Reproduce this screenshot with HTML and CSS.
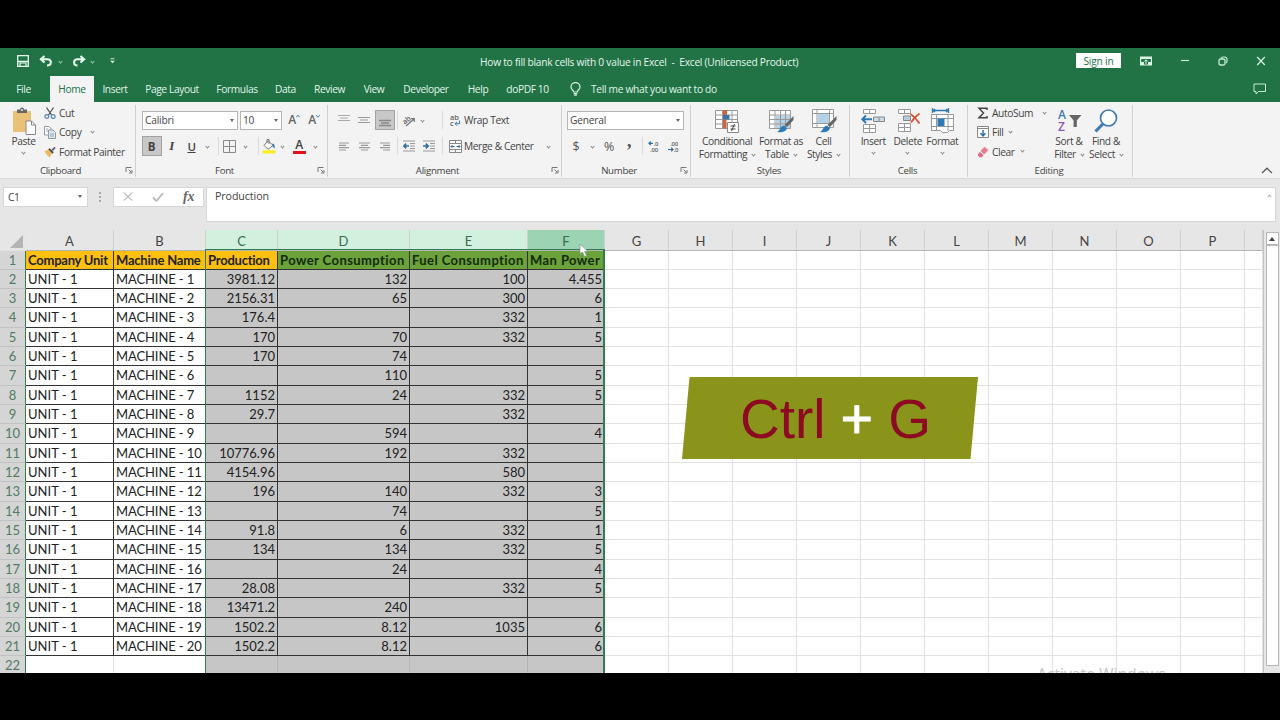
FILE: index.html
```html
<!DOCTYPE html>
<html lang="en">
<head>
  <meta charset="UTF-8">
  <title>How to fill blank cells with 0 value in Excel</title>
  <meta name="viewport" content="width=device-width, initial-scale=1.0">
  <link rel="stylesheet" href="styles.css">
</head>
<body>

  <div class="window">

    <header class="titlebar">
      <div class="quick">
        <svg width="12" height="12" viewBox="0 0 12 12"><path d="M.7.700h10.600v10.600H.7zM.7 6.500h10.600" fill="none" stroke="#e6fff0" stroke-width="1.300"/><path d="M3 11V8h6v3" fill="none" stroke="#e6fff0" stroke-width="1.200"/></svg>
        <svg width="14" height="12" viewBox="0 0 14 12"><path d="M5.500 1L1.800 4.300l3.700 3.200M2 4.300h6.500c4.600 0 4.600 6.200-.5 6.200" fill="none" stroke="#e6fff0" stroke-width="2"/></svg>
        <i class="chev light"></i>
        <svg width="14" height="12" viewBox="0 0 14 12"><path d="M8.500 1l3.700 3.300-3.700 3.200M12 4.300H5.500c-4.600 0-4.600 6.200 0 6.200" fill="none" stroke="#e6fff0" stroke-width="2"/></svg>
        <i class="chev light"></i>
        <svg width="5" height="6" viewBox="0 0 5 6"><path d="M.5.800h4" stroke="#c9ecd5"/><path d="M.3 2.800h4.400L2.500 5.300z" fill="#e6fff0"/></svg>
      </div>
      <div class="doc-title">How to fill blank cells with 0 value in Excel &nbsp;- &nbsp;Excel (Unlicensed Product)</div>
      <div class="win-controls">
        <button class="signin">Sign in</button>
        <svg width="12" height="10" viewBox="0 0 12 10"><path d="M.6 1h10.800v8H.6z" fill="none" stroke="#d8f5e2" stroke-width="1.200"/><path d="M1 1h10v2H1zM1 6h3v3H1zM8 6h3v3H8z" fill="#d8f5e2"/><path d="M6 8V4M4.300 5.500L6 3.800l1.700 1.700" fill="none" stroke="#d8f5e2"/></svg>
        <svg width="10" height="10" viewBox="0 0 10 10"><path d="M1 4.500h8" stroke="#c9ecd5" stroke-width="1.200"/></svg>
        <svg width="10" height="10" viewBox="0 0 10 10"><rect x="1" y="3" width="6" height="6" rx="1.500" fill="none" stroke="#c9ecd5" stroke-width="1.300"/><path d="M3 2.200C3.500 1 4 1 5 1h1.500C8.500 1 9 2 9 3.500V5c0 1-.3 1.700-1.200 2" fill="none" stroke="#c9ecd5" stroke-width="1.200"/></svg>
        <svg width="10" height="10" viewBox="0 0 10 10"><path d="M1.200 1l7.600 8M8.800 1L1.200 9" stroke="#d8f5e2" stroke-width="1.200"/></svg>
      </div>
    </header>

    <nav class="tabs">
      <span>File</span>
      <span class="active">Home</span>
      <span>Insert</span>
      <span>Page Layout</span>
      <span>Formulas</span>
      <span>Data</span>
      <span>Review</span>
      <span>View</span>
      <span>Developer</span>
      <span>Help</span>
      <span>doPDF 10</span>
      <span><svg width="11" height="14" viewBox="0 0 11 14"><path d="M3.500 10V9C2.500 8 1 7 1 4.900a4.500 4.300 0 0 1 9 0C10 7 8.500 8 7.500 9v1zM3.700 11.600h3.600M4.200 13.200h2.600" fill="none" stroke="#d8f5e2" stroke-width="1.200"/></svg></span>
      <span class="tell">Tell me what you want to do</span>
      <span class="comment"><svg width="14" height="12" viewBox="0 0 14 12"><path d="M1 1h11.500v7.500H5.500L3 11V8.500H1z" fill="none" stroke="#c9ecd5"/></svg></span>
    </nav>

    <section class="ribbon">

      <div class="group clipboard">
        <div class="tools">
          <div class="big">
            <svg width="26" height="28" viewBox="0 0 26 28"><path d="M2 4h18v21H2z" fill="#e9c277"/><path d="M6 2.500h3a2 2 0 0 1 4 0h3V6H6z" fill="#666"/><circle cx="11" cy="3" r="1" fill="#eee"/><path d="M15 14h5.500l4 4v9.500H15z" fill="#fff" stroke="#888"/><path d="M20.500 14v4h4" fill="none" stroke="#888"/></svg>
            <span>Paste</span>
            <i class="chev"></i>
          </div>
          <div class="stack">
            <div><svg width="12" height="12" viewBox="0 0 12 12"><path d="M2.500.500l5 7.500M9.500.500l-5 7.500" stroke="#555" stroke-width="1.300"/><circle cx="2.800" cy="9.500" r="1.900" fill="none" stroke="#5b87b5" stroke-width="1.200"/><circle cx="9.200" cy="9.500" r="1.900" fill="none" stroke="#5b87b5" stroke-width="1.200"/></svg>Cut</div>
            <div><svg width="12" height="13" viewBox="0 0 12 13"><path d="M.5.500h4.500l2 2V9H.5z" fill="#fff" stroke="#8f9aa5"/><path d="M4.500 4h4.500l2.500 2.500v6h-7z" fill="#dce6ef" stroke="#8f9aa5"/><path d="M6 8h4M6 10h4M2 3h2M2 5h2" stroke="#7f9ab5" stroke-width=".8"/></svg>Copy<i class="chev far"></i></div>
            <div><svg width="12" height="12" viewBox="0 0 12 12"><path d="M.5 5.500L4 3.500l4 4-2.500 4C4 10 2 8 .5 5.500z" fill="#ecb862"/><path d="M4.200 3.200l1.500-1 4 4-1.200 1.500z" fill="#444"/><path d="M7.500 3.500L10.500.800l1.200 1.200L9 5z" fill="#666"/></svg>Format Painter</div>
          </div>
        </div>
        <div class="caption">Clipboard<svg class="launch" width="8" height="8" viewBox="0 0 8 8"><path d="M1 6V1.500h5.500M3.500 3.500l3 3M7 4v3H4" fill="none" stroke="#777"/></svg></div>
      </div>

      <div class="group font">
        <div class="row font-top">
          <div class="select">Calibri<i class="tri"></i></div>
          <div class="select">10<i class="tri"></i></div>
          <div class="letter">A<svg width="4" height="4" viewBox="0 0 4 4"><path d="M.3 3.300L2 1.200l1.700 2.100" fill="none" stroke="#4a7fae"/></svg></div>
          <div class="letter">A<svg width="4" height="4" viewBox="0 0 4 4"><path d="M.3 1.200L2 3.200l1.700-2" fill="none" stroke="#4a7fae"/></svg></div>
        </div>
        <div class="row font-bottom">
          <div class="pressed bold">B</div>
          <div class="italic">I</div>
          <div class="underline">U</div>
          <i class="chev"></i>
          <i class="sep"></i>
          <svg width="13" height="13" viewBox="0 0 13 13"><path d="M.5.500h12v12H.5zM6.500.500v12M.5 6.500h12" fill="none" stroke="#8a8a8a"/></svg>
          <i class="chev"></i>
          <i class="sep"></i>
          <svg width="14" height="15" viewBox="0 0 14 15"><path d="M6 1.800l5 4.500-5 4-4-4z" fill="#fff" stroke="#777"/><path d="M5 4V.600h2V5" fill="none" stroke="#777"/><path d="M10.500 4.500c2 .5 2.500 2 2 5l-2-2z" fill="#3f78ad"/><path d="M.5 11.300h13v3.200H.5z" fill="#f7f01c"/></svg>
          <i class="chev"></i>
          <div class="fontcolor">A</div>
          <i class="chev"></i>
        </div>
        <div class="caption">Font<svg class="launch" width="8" height="8" viewBox="0 0 8 8"><path d="M1 6V1.500h5.500M3.500 3.500l3 3M7 4v3H4" fill="none" stroke="#777"/></svg></div>
      </div>

      <div class="group align">
        <div class="row align-top">
          <svg class="up" width="12" height="8" viewBox="0 0 12 8"><path d="M0 1.500h12M2 4h8M0 6.500h12" stroke="#aaa" stroke-width="1.200"/></svg>
          <svg width="12" height="8" viewBox="0 0 12 8"><path d="M0 1.500h12M2 4h8M0 6.500h12" stroke="#999" stroke-width="1.200"/></svg>
          <div class="pressed low"><svg width="12" height="8" viewBox="0 0 12 8"><path d="M0 1.500h12M2 4h8M0 6.500h12" stroke="#888" stroke-width="1.400"/></svg></div>
          <i class="sep"></i>
          <svg width="14" height="13" viewBox="0 0 14 13"><path d="M4 12L12 5M9 4.700h3.300V8" fill="none" stroke="#777" stroke-width="1.200"/><text x="0" y="9" class="icon-text slant" transform="rotate(-40 4 6)">ab</text></svg>
          <i class="chev"></i>
          <i></i>
          <i class="sep"></i>
          <svg width="12" height="13" viewBox="0 0 12 13"><text x="1" y="5.500" class="icon-text ab">ab</text><text x="1" y="12" class="icon-text ab">c</text><path d="M10.500 6.500v3.200H6M8 7.800L6 9.700l2 2" fill="none" stroke="#3f78ad"/></svg>
          <span>Wrap Text</span>
        </div>
        <div class="row align-bottom">
          <svg width="10" height="9" viewBox="0 0 10 9"><path d="M0 1h10M0 3.300h7M0 5.600h10M0 8h7" stroke="#999" stroke-width="1.200"/></svg>
          <svg width="11" height="9" viewBox="0 0 11 9"><path d="M0 1h11M2 3.300h7M0 5.600h11M2 8h7" stroke="#999" stroke-width="1.200"/></svg>
          <svg width="10" height="9" viewBox="0 0 10 9"><path d="M0 1h10M3 3.300h7M0 5.600h10M3 8h7" stroke="#999" stroke-width="1.200"/></svg>
          <i class="sep"></i>
          <svg width="12" height="12" viewBox="0 0 12 12"><path d="M0 1h12M7 3.500h5M7 6h5M7 8.500h5M0 11h12" stroke="#999" stroke-width="1.200"/><path d="M6 6H1M3.200 3.600L.8 6l2.400 2.400" fill="none" stroke="#2f6fa8" stroke-width="1.600"/></svg>
          <svg width="12" height="12" viewBox="0 0 12 12"><path d="M0 1h12M7 3.500h5M7 6h5M7 8.500h5M0 11h12" stroke="#999" stroke-width="1.200"/><path d="M0 6h5M2.800 3.600L5.200 6 2.800 8.400" fill="none" stroke="#2f6fa8" stroke-width="1.600"/></svg>
          <i class="sep"></i>
          <svg width="13" height="13" viewBox="0 0 13 13"><path d="M.5.500h12v12H.5zM.5 3.500h12M.5 9.500h12M6.500.500v3M6.500 9.500v3" fill="#fff" stroke="#888"/><path d="M2 6.500h3.500M7.500 6.500H11M3.500 5L2 6.500 3.500 8M9.500 5L11 6.500 9.500 8" fill="none" stroke="#2f6fa8"/></svg>
          <span>Merge &amp; Center</span>
          <i class="chev"></i>
        </div>
        <div class="caption">Alignment<svg class="launch" width="8" height="8" viewBox="0 0 8 8"><path d="M1 6V1.500h5.500M3.500 3.500l3 3M7 4v3H4" fill="none" stroke="#777"/></svg></div>
      </div>

      <div class="group number">
        <div class="row number-top">
          <div class="select">General<i class="tri"></i></div>
        </div>
        <div class="row number-bottom">
          <div class="sym">$</div>
          <i class="chev"></i>
          <div class="sym">%</div>
          <div class="comma">,</div>
          <i class="sep"></i>
          <svg width="12" height="13" viewBox="0 0 12 13"><path d="M5 3.300H1M2.700 1.500L1 3.300l1.700 1.800" fill="none" stroke="#2f6fa8" stroke-width="1.200"/><text x="5.500" y="5.500" class="icon-text">.0</text><text x="2" y="12" class="icon-text">.00</text></svg>
          <svg width="12" height="13" viewBox="0 0 12 13"><path d="M0 9.500h5M3.200 7.700L5 9.500l-1.800 1.800" fill="none" stroke="#2f6fa8" stroke-width="1.200"/><text x="2" y="5.500" class="icon-text">.00</text><text x="5.500" y="12" class="icon-text">.0</text></svg>
        </div>
        <div class="caption">Number<svg class="launch" width="8" height="8" viewBox="0 0 8 8"><path d="M1 6V1.500h5.500M3.500 3.500l3 3M7 4v3H4" fill="none" stroke="#777"/></svg></div>
      </div>

      <div class="group styles">
        <div class="tools">
          <div class="big">
            <svg width="26" height="26" viewBox="0 0 26 26"><path d="M1.500 2.500h22v18h-22zM1.500 7h22M1.500 11.500h22M1.500 16h22M8.500 2.500v18M18 2.500v18" fill="#fff" stroke="#999"/><path d="M9 2h4v5H9zM9 11.500h3.500v9H9z" fill="#d2623f"/><path d="M9 7h6.500v4.500H9z" fill="#3b74aa"/><path d="M13.500 14.500h11v10h-11z" fill="#fff" stroke="#888"/><path d="M16.500 18h5M16.500 21h5M20.500 16l-3 7" stroke="#444"/></svg>
            <span>Conditional<br>Formatting<i class="chev"></i></span>
          </div>
          <div class="big">
            <svg width="26" height="26" viewBox="0 0 26 26"><path d="M1.500 2.500h21v18h-21z" fill="#fff" stroke="#999"/><path d="M8 8h14v12H8z" fill="#b4d2e7"/><path d="M1.500 7h21M1.500 11.500h21M1.500 16h21M7 2.500v18M12.500 2.500v18M17.500 2.500v18" stroke="#999"/><path d="M25.500 8v4L19 19l-2.500-2z" fill="#666"/><path d="M16 17.500l3 2.500c-1 4-6 5-10 4 3-1 3-6 7-6.500z" fill="#2f79b5"/></svg>
            <span>Format as<br>Table<i class="chev"></i></span>
          </div>
          <div class="big">
            <svg width="26" height="26" viewBox="0 0 26 26"><path d="M1.500 1.500h21v18h-21z" fill="#fff" stroke="#999"/><path d="M1.500 5.500h21M1.500 15.500h21M6 1.500v18M18.500 1.500v18" stroke="#999"/><path d="M6.500 6h11.500v9H6.500z" fill="#b4d2e7"/><path d="M25.500 8v4L19 19l-2.500-2z" fill="#666"/><path d="M16 17.500l3 2.500c-1 4-6 5-10 4 3-1 3-6 7-6.500z" fill="#2f79b5"/></svg>
            <span>Cell<br>Styles<i class="chev"></i></span>
          </div>
        </div>
        <div class="caption">Styles</div>
      </div>

      <div class="group cells">
        <div class="tools">
          <div class="big">
            <svg width="26" height="26" viewBox="0 0 26 26"><path d="M3.500 1.500h12v4h-12zM9.500 1.500v4M3.500 16.500h12v8h-12zM3.500 20.500h12M9.500 16.500v8" fill="#fff" stroke="#999"/><path d="M13.500 9h11v4.500h-11zM19 9v4.500" fill="#c9d9e8" stroke="#888"/><path d="M12 11.200H2.500M6 7.500l-3.700 3.700L6 15" fill="none" stroke="#2f79b5" stroke-width="2"/></svg>
            <span>Insert</span>
            <i class="chev"></i>
          </div>
          <div class="big">
            <svg width="26" height="26" viewBox="0 0 26 26"><path d="M3.500 1.500h12v4h-12zM9.500 1.500v4M3.500 15.500h12v8h-12zM3.500 19.500h12M9.500 15.500v8" fill="#fff" stroke="#999"/><path d="M8.500 8h7v4.500h-7z" fill="#b7cde0" stroke="#888"/><path d="M15.500 6c3 2 6 5 9 9.500M24.500 5.500c-3 2-6 5-8.500 9" fill="none" stroke="#d35a38" stroke-width="2"/></svg>
            <span>Delete</span>
            <i class="chev"></i>
          </div>
          <div class="big">
            <svg width="26" height="26" viewBox="0 0 26 26"><path d="M4 2.500h15M3.500 0v5M19.500 0v5M6 1L4 2.500 6 4M17 1l2 1.500L17 4" fill="none" stroke="#2f79b5" stroke-width="1.300"/><path d="M2.500 6.500h22v16h-4l-2 2h-5l-2-2h-9zM2.500 10.500h22M2.500 18.500h22M7.500 6.500v16M19 6.500v16" fill="#fff" stroke="#999"/><path d="M8.500 10.500h7v7.500h-7z" fill="#2f79b5"/></svg>
            <span>Format</span>
            <i class="chev"></i>
          </div>
        </div>
        <div class="caption">Cells</div>
      </div>

      <div class="group editing">
        <div class="tools">
          <div class="stack">
            <div><svg width="12" height="12" viewBox="0 0 12 12"><path d="M10 3V1.200H2L6.500 6 2 10.800h8V9" fill="none" stroke="#444" stroke-width="1.500"/></svg>AutoSum<i class="chev far"></i></div>
            <div><svg width="12" height="12" viewBox="0 0 12 12"><path d="M.5.500h11v11H.5z" fill="#fff" stroke="#888"/><path d="M.5 2.500h11" stroke="#888"/><path d="M6 4v6M3.500 7.200L6 9.800l2.500-2.600" fill="none" stroke="#2f6fa8" stroke-width="1.500"/></svg>Fill<i class="chev"></i></div>
            <div><svg width="12" height="12" viewBox="0 0 12 12"><path d="M7.500.800L11.300 4 7.200 8.500 3.500 5z" fill="#e8798e"/><path d="M2.800 5.700l3.700 3.500-1.700 2H2.500L.7 9z" fill="#e36a80"/></svg>Clear<i class="chev"></i></div>
          </div>
          <div class="big">
            <svg width="26" height="26" viewBox="0 0 26 26"><text x="2" y="11" class="sort-a">A</text><text x="2" y="23" class="sort-z">Z</text><path d="M13 7h12.500l-4.700 5.500V19h-3.200v-6.500z" fill="#666"/></svg>
            <span>Sort &amp;<br>Filter<i class="chev"></i></span>
          </div>
          <div class="big">
            <svg width="26" height="26" viewBox="0 0 26 26"><circle cx="15.500" cy="10" r="8" fill="#fff" stroke="#3f7cb5" stroke-width="1.700"/><path d="M9.800 16L2.500 23.500" stroke="#3f7cb5" stroke-width="3.200"/></svg>
            <span>Find &amp;<br>Select<i class="chev"></i></span>
          </div>
        </div>
        <div class="caption">Editing</div>
      </div>

      <svg class="collapse" width="12" height="7" viewBox="0 0 12 7"><path d="M1 6l5-4.800L11 6" fill="none" stroke="#555" stroke-width="1.200"/></svg>
    </section>

    <section class="formula-bar">
      <div class="name-box">C1<i class="tri"></i></div>
      <div class="dots"><i></i><i></i><i></i></div>
      <div class="fx">
        <svg width="10" height="9" viewBox="0 0 10 9"><path d="M.8.500l8.400 8M9.200.500L.8 8.500" stroke="#c2c2c2" stroke-width="1.200"/></svg>
        <svg width="12" height="10" viewBox="0 0 12 10"><path d="M1 5.500l3.500 3.500L11 1.200" fill="none" stroke="#bbb" stroke-width="1.800"/></svg>
        <span>fx</span>
      </div>
      <div class="formula">Production<i class="chev upward"></i></div>
    </section>

    <main class="sheet">
      <div class="grid" id="grid"></div>
      <div class="scroll">
        <div class="scroll-up"><i></i></div>
        <div class="scroll-track"></div>
      </div>
      <div class="selection"></div>
      <svg class="cursor" width="10" height="15" viewBox="0 0 10 15"><path d="M1 1v10l2.500-2 2 4.500 2-1L5.700 8.500H9z" fill="#fff" stroke="#7a9a88" stroke-width=".7"/></svg>
      <div class="shortcut"><span>Ctrl <b>+</b> G</span></div>
      <div class="watermark">Activate Windows</div>
    </main>

  </div>

  <script src="script.js"></script>
</body>
</html>
```
FILE: styles.css
```css
* {
  margin: 0;
  padding: 0;
  box-sizing: border-box;
}

body {
  width: 1280px;
  height: 720px;
  padding: 48px 0 47px;
  overflow: hidden;
  background: #000;
  font-family: "Open Sans", "Noto Sans", sans-serif;
  font-size: 10.2px;
  letter-spacing: -.38px;
  color: #444;
}

svg {
  display: block;
  flex: none;
}

.window {
  display: flex;
  flex-direction: column;
  height: 625px;
  overflow: hidden;
  background: #e6e6e6;
}

/* title bar */
.titlebar {
  display: grid;
  grid-template-columns: 480px 1fr 204px;
  height: 28px;
  align-items: center;
  background: #217346;
  color: #e6f5ec;
}

.quick {
  display: grid;
  grid-template-columns: 13px 34px 0 32px 0 34px;
  justify-items: center;
  align-items: center;
  padding: 0 0 2px 16px;
}

.quick .light {
  justify-self: start;
  margin-left: -4px;
}

.doc-title {
  letter-spacing: -.24px;
  white-space: nowrap;
}

.win-controls {
  display: grid;
  grid-template-columns: 45px 50px 28px 48px 28px;
  align-items: center;
  justify-items: center;
  height: 28px;
  padding-bottom: 3px;
}

.signin {
  width: 45px;
  height: 15px;
  border: none;
  background: #fff;
  color: #217346;
  font: inherit;
  line-height: 14px;
  letter-spacing: -.2px;
}

/* tabs */
.tabs {
  display: grid;
  grid-template-columns: 50px 44px 42px 72px 58px 39px 49px 40px 64px 40px 59px 37px 1fr 40px;
  height: 26px;
  background: #217346;
  color: #e0f3e8;
  white-space: nowrap;
}

.tabs span {
  display: flex;
  justify-content: center;
  align-items: center;
  padding-bottom: 1px;
}

.tabs span:first-child {
  padding-right: 3px;
}

.tabs .active {
  background: #f3f3f3;
  color: #217346;
}

.tabs .tell {
  justify-content: flex-start;
  margin-left: -3px;
  letter-spacing: -.3px;
}

/* small marks */
.chev {
  display: inline-block;
  width: 3px;
  height: 3px;
  border-right: 1px solid #888;
  border-bottom: 1px solid #888;
  transform: rotate(45deg);
}

.chev.light {
  border-color: #9fd0b3;
}

.chev.upward {
  border-color: #aaa;
  transform: rotate(225deg);
}

.tri {
  border: 2.5px solid transparent;
  border-top: 3px solid #666;
  border-bottom: none;
}

.sep {
  width: 1px;
  height: 18px;
  background: #dcdcdc;
}

.icon-text {
  font-size: 6px;
  font-weight: 600;
  letter-spacing: -.2px;
  fill: #666;
}

.icon-text.ab,
.icon-text.slant {
  font-size: 7.5px;
}

/* ribbon */
.ribbon {
  display: flex;
  height: 77px;
  background: #f3f3f3;
  border-bottom: 1px solid #d9d9d9;
  white-space: nowrap;
}

.group {
  display: flex;
  flex-direction: column;
  height: 72px;
  margin-top: 3px;
  border-right: 1px solid #d0d0d0;
}

.clipboard { width: 136px; }
.font { width: 192px; }
.align { width: 234px; }
.number { width: 129px; }
.styles { width: 159px; }
.cells { width: 118px; }
.editing { width: 165px; }

.tools {
  display: flex;
  height: 59px;
}

.big {
  display: flex;
  flex-direction: column;
  align-items: center;
  text-align: center;
  line-height: 13.5px;
  padding-top: 1.5px;
}

.big svg {
  height: 28px;
}

.big > .chev {
  margin-top: 3px;
}

.big span .chev {
  margin: 0 0 2px 5px;
}

.clipboard .big { width: 33px; margin-left: 7px; }
.styles .big:nth-child(1) { width: 60px; margin-left: 6px; }
.styles .big:nth-child(2) { width: 48px; }
.styles .big:nth-child(3) { width: 37px; }
.cells .big { width: 34.5px; }
.cells .big:first-child { margin-left: 6px; }
.editing .big:nth-child(2) { width: 38px; }
.editing .big:nth-child(3) { width: 36px; }

.stack {
  display: flex;
  flex-direction: column;
  padding-left: 4px;
  margin-top: -1.5px;
}

.stack div {
  display: flex;
  align-items: center;
  height: 19.3px;
}

.stack div svg {
  margin-right: 3px;
}

.stack .chev {
  margin: -2px 0 0 6px;
}

.stack .chev.far {
  margin-left: 10px;
}

.editing .stack {
  width: 82px;
  padding-left: 9px;
}

.caption {
  display: flex;
  justify-content: center;
  align-items: center;
  position: relative;
  height: 13px;
  margin-top: auto;
  padding-right: 14px;
  font-size: 9.7px;
  letter-spacing: -.3px;
}

.styles .caption,
.cells .caption,
.editing .caption {
  padding-right: 2px;
}

.launch {
  position: absolute;
  right: 2px;
  top: 2px;
}

.row {
  display: grid;
  align-items: center;
  justify-content: start;
  justify-items: center;
  height: 20px;
  margin: 5px 0 0 6px;
}

.row + .row {
  margin-top: 6px;
}

.number .row {
  margin-left: 5px;
}

.font-top { grid-template-columns: 96px 2px 42px 24px 16px; }
.font-top .select:nth-child(2) { grid-column: 3; }
.font-bottom { grid-template-columns: 19px 21px 19px 12px 10px 13px 18px 8px 13px 15px 18px 14px; }
.align-top { grid-template-columns: 20px 20px 21px 4px 20px 6px 14px 6px 20px auto; }
.align-bottom { grid-template-columns: 20px 20px 21px 4px 20px 20px 6px 20px 72px 22px; }
.number-top { grid-template-columns: 117px; }
.number-bottom { grid-template-columns: 18px 14px 20px 20px 6px 18px 22px; }

.align-top .up {
  margin-top: -5px;
}

.row span {
  justify-self: start;
  margin-left: -1px;
}

.select {
  display: flex;
  justify-content: space-between;
  align-items: center;
  width: 100%;
  height: 19px;
  padding: 0 3px 0 2px;
  background: #fff;
  border: 1px solid #b5b5b5;
  letter-spacing: -.2px;
}

.letter {
  display: flex;
  font-size: 12px;
  font-weight: 600;
  line-height: 16px;
  color: #666;
}

.letter svg {
  margin-top: 2px;
}

.pressed {
  display: flex;
  justify-content: center;
  align-items: center;
  width: 20px;
  height: 20px;
  background: #c8c8c8;
  border: 1px solid #a2a2a2;
}

.pressed.low svg {
  margin-top: 5px;
}

.bold {
  font-size: 11.5px;
  font-weight: 700;
}

.italic {
  font: italic 700 13px "Liberation Serif", serif;
}

.underline {
  font-size: 11.5px;
  font-weight: 600;
  text-decoration: underline;
}

.fontcolor {
  width: 13px;
  height: 15px;
  border-bottom: 3px solid #e0111b;
  font-size: 12px;
  font-weight: 600;
  line-height: 11px;
  text-align: center;
}

.sym {
  font-size: 12.5px;
  color: #555;
}

.comma {
  margin-top: -9px;
  font: 700 18px "Liberation Serif", serif;
  color: #555;
}

.sort-a,
.sort-z {
  font-size: 12px;
  font-weight: 600;
  fill: #3f7cb5;
}

.sort-z {
  fill: #9057b5;
}

.collapse {
  margin: 65px 0 0 128px;
}

/* formula bar */
.formula-bar {
  display: flex;
  height: 51px;
  padding: 8px 0 0 3px;
  background: #e6e6e6;
}

.name-box,
.fx,
.formula {
  display: flex;
  height: 20px;
  background: #fff;
  border: 1px solid #d6d6d6;
}

.name-box {
  width: 85px;
  align-items: center;
  justify-content: space-between;
  padding: 0 5px 1px 4px;
}

.dots {
  display: flex;
  flex-direction: column;
  gap: 2px;
  width: 25px;
  padding: 5px 0 0 11px;
}

.dots i {
  width: 2px;
  height: 2px;
  background: #aaa;
}

.fx {
  width: 91px;
  align-items: center;
  justify-content: space-between;
  padding: 0 9px 1px;
}

.fx span {
  font: italic 700 14px "Liberation Serif", serif;
  color: #666;
}

.formula {
  width: 1070px;
  height: 35px;
  margin-left: 2px;
  padding: 1px 4px 0 8px;
  justify-content: space-between;
  font-size: 10.7px;
  letter-spacing: -.1px;
}

.formula .chev {
  margin-top: 6px;
}

/* worksheet */
.sheet {
  display: flex;
  position: relative;
  flex: 1;
  overflow: hidden;
}

.grid {
  display: grid;
  grid-template-columns: 26px 88px 92px 72px 132px 118px 77px repeat(10, 64px) 18px;
  grid-template-rows: 20.5px repeat(22, 19.33px);
  width: 1263px;
  flex: none;
  overflow: hidden;
  font-family: Lato, "Open Sans", sans-serif;
  font-size: 13px;
  line-height: 19px;
  letter-spacing: 0;
  color: #222;
  background: #fff;
}

.grid div {
  border-right: 1px solid #e2e2e2;
  border-bottom: 1px solid #e2e2e2;
  white-space: nowrap;
}

.grid .head {
  background: #e6e6e6;
  border-right-color: #cfcfcf;
  border-bottom-color: #b5b5b5;
  color: #444;
  line-height: 22px;
  text-align: center;
}

.grid .head.picked {
  background: #d1f0de;
  color: #3c6b50;
}

.grid .head.current {
  background: #9bd3b3;
}

.grid .corner {
  display: flex;
  justify-content: flex-end;
  align-items: flex-end;
  padding: 0 2px 2px 0;
  background: #e6e6e6;
}

.corner i {
  border-left: 13px solid transparent;
  border-bottom: 13px solid #b4b4b4;
}

.grid .rownum {
  background: #d4d5d4;
  border-right-color: #2f7d50;
  border-bottom-color: #c2c2c2;
  color: #537a64;
  text-align: center;
}

.grid .data {
  border-color: #333;
  padding: 0 2px;
}

.grid .machine {
  letter-spacing: -.1px;
}

.grid .title {
  font-weight: 700;
  letter-spacing: -.23px;
  background: #fdbf10;
}

.grid .title.green {
  background: #6ba23a;
  color: #142b0a;
  letter-spacing: .42px;
}

.grid .picked-cell {
  background: #c6c6c6;
  text-align: right;
}

.grid .blank.picked-cell {
  border-color: #b4b4b4;
}

/* green outline round columns C to F */
.selection {
  position: absolute;
  left: 205px;
  top: 19px;
  width: 400px;
  height: 450px;
  border: 1px solid #2f7d50;
  border-right-width: 2px;
}

.cursor {
  position: absolute;
  left: 579px;
  top: 13px;
}

.shortcut {
  position: absolute;
  left: 682px;
  top: 147px;
  width: 296px;
  height: 82px;
  padding-left: 58px;
  background: #8a941b;
  clip-path: polygon(7.5px 0, 100% 0, 288.5px 100%, 0 100%);
  font: 55px/85px "Liberation Sans", Arial, sans-serif;
  letter-spacing: 0;
  color: #8c0b22;
  white-space: nowrap;
}

.shortcut b {
  font-weight: 400;
  color: #fff;
  -webkit-text-stroke: 1px #fff;
}

.watermark {
  position: absolute;
  left: 1037px;
  top: 434px;
  font-size: 15.7px;
  line-height: 20px;
  letter-spacing: 0;
  color: #c4c4c4;
}

.scroll {
  display: flex;
  flex-direction: column;
  align-items: center;
  width: 17px;
  padding-top: 2px;
  background: #e6e6e6;
  border-left: 1px solid #c4c4c4;
}

.scroll-up {
  display: flex;
  justify-content: center;
  align-items: center;
  width: 13px;
  height: 13px;
  background: #fff;
  border: 1px solid #b8b8b8;
}

.scroll-up i {
  border: 3px solid transparent;
  border-bottom: 4px solid #444;
  border-top: none;
}

.scroll-track {
  width: 13px;
  height: 421px;
  background: #fff;
  border: 1px solid #b8b8b8;
}
```
FILE: script.js
```js
const titles = ["Company Unit", "Machine Name", "Production", "Power Consumption", "Fuel Consumption", "Man Power"];

// Production, Power, Fuel, Man Power
const rows = [
  ["3981.12", "132", "100", "4.455"],
  ["2156.31", "65", "300", "6"],
  ["176.4", "", "332", "1"],
  ["170", "70", "332", "5"],
  ["170", "74", "", ""],
  ["", "110", "", "5"],
  ["1152", "24", "332", "5"],
  ["29.7", "", "332", ""],
  ["", "594", "", "4"],
  ["10776.96", "192", "332", ""],
  ["4154.96", "", "580", ""],
  ["196", "140", "332", "3"],
  ["", "74", "", "5"],
  ["91.8", "6", "332", "1"],
  ["134", "134", "332", "5"],
  ["", "24", "", "4"],
  ["28.08", "", "332", "5"],
  ["13471.2", "240", "", ""],
  ["1502.2", "8.12", "1035", "6"],
  ["1502.2", "8.12", "", "6"]
];

const grid = document.getElementById("grid");

function addCell(text, className) {
  const cell = document.createElement("div");
  cell.className = className;
  cell.textContent = text;
  grid.appendChild(cell);
  return cell;
}

addCell("", "corner").appendChild(document.createElement("i"));

"ABCDEFGHIJKLMNOP".split("").concat("").forEach((letter, i) => {
  let cls = "head";
  if (i >= 2 && i <= 5) cls += " picked";
  if (i === 5) cls += " current";
  addCell(letter, cls);
});

for (let r = 1; r <= 22; r++) {
  addCell(r, "rownum");
  for (let c = 0; c < 17; c++) {
    if (c > 5) {
      addCell("", "blank");
    } else if (r === 1) {
      addCell(titles[c], c > 2 ? "data title green" : "data title");
    } else if (r === 22) {
      addCell("", c > 1 ? "blank picked-cell" : "blank");
    } else if (c === 0) {
      addCell("UNIT - 1", "data");
    } else if (c === 1) {
      addCell("MACHINE - " + (r - 1), "data machine");
    } else {
      addCell(rows[r - 2][c - 2], "data picked-cell");
    }
  }
}
```
